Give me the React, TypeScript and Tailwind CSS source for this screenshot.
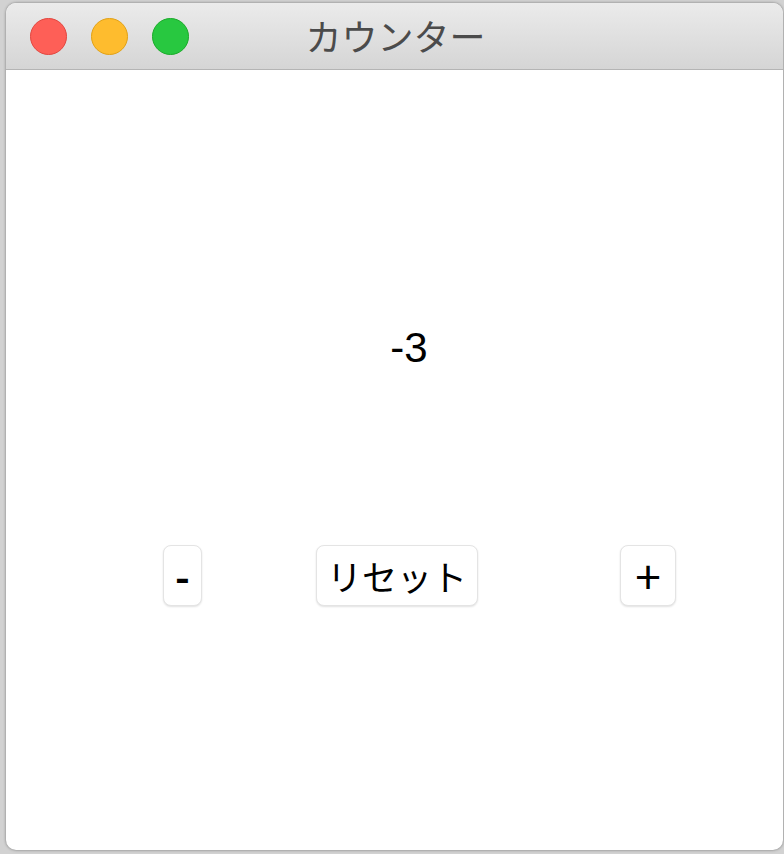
import React, { useState } from "react";

export default function App() {
  const [count, setCount] = useState(-3);
  const font = { fontFamily: '"Noto Sans CJK JP", "Noto Sans", sans-serif' };
  return (
    <div className="w-[784px] h-[854px] bg-[#d2d2d2] pt-[3px] pl-[6px] overflow-hidden" style={font}>
      <div className="w-[777px] h-[847px] rounded-[10px] overflow-hidden bg-white shadow-[0_0_3px_rgba(0,0,0,0.45)] flex flex-col">
        <div className="h-[67px] shrink-0 bg-gradient-to-b from-[#ebebeb] to-[#d5d5d5] border-b border-[#b4b4b4] grid grid-cols-[1fr_auto_1fr] items-center">
          <div className="flex items-center gap-[24px] pl-[24px]">
            <span className="w-[37px] h-[37px] rounded-full bg-[#fe5f57] border border-[#e2463f]" />
            <span className="w-[37px] h-[37px] rounded-full bg-[#febc2e] border border-[#e1a116]" />
            <span className="w-[37px] h-[37px] rounded-full bg-[#28c840] border border-[#1aab29]" />
          </div>
          <div className="text-[36px] leading-none text-[#4b4b4b] pl-[2px] pb-[2px]">カウンター</div>
          <div />
        </div>
        <div className="flex-1 flex flex-col">
          <div className="mt-[253px] h-[50px] flex justify-center pl-[29px] text-[42px] leading-[50px] text-black" style={{ fontFamily: '"Liberation Sans", Arial, sans-serif' }}>
            {count}
          </div>
          <div className="mt-[172px] flex items-center pl-[157px]">
            <button onClick={() => setCount(count - 1)} className="w-[39px] h-[61px] rounded-[8px] border border-[#e4e4e4] bg-white shadow-[0_1px_2px_rgba(0,0,0,0.12)] flex items-center justify-center text-[40px] font-bold leading-none text-black pb-[2px]">-</button>
            <button onClick={() => setCount(0)} className="ml-[114px] w-[162px] h-[61px] rounded-[8px] border border-[#e4e4e4] bg-white shadow-[0_1px_2px_rgba(0,0,0,0.12)] flex items-center justify-center text-[35px] leading-none text-black">リセット</button>
            <button onClick={() => setCount(count + 1)} className="ml-[142px] w-[56px] h-[61px] rounded-[8px] border border-[#e4e4e4] bg-white shadow-[0_1px_2px_rgba(0,0,0,0.12)] flex items-center justify-center text-[46px] font-normal leading-none text-black pb-[3px]">+</button>
          </div>
        </div>
      </div>
    </div>
  );
}
